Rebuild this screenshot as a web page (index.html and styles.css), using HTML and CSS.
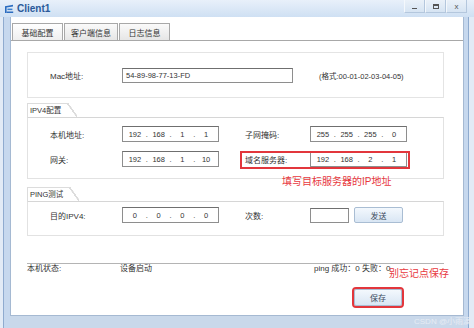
FILE: index.html
```html
<!DOCTYPE html>
<html lang="zh">

<head>
  <meta charset="UTF-8" />
  <title>Client1</title>
  <link rel="stylesheet" href="styles.css">
</head>

<body>
  <div class="window">
    <!-- Заголовок окна -->
    <div class="titlebar">
      <svg class="title-icon" viewBox="0 0 10 10">
        <path d="M1 2.2 L9 0.8 L9 2.4 L2.6 3.4 Z" fill="#2b6cc0" />
        <path d="M1 2.2 L2.6 2.2 L2.6 9 L1 9 Z" fill="#2b6cc0" />
        <rect x="3.4" y="4.6" width="5" height="1.5" fill="#3a80d0" />
        <rect x="2.6" y="7.5" width="6.6" height="1.5" fill="#2b6cc0" />
      </svg>
      <span class="title-text">Client1</span>
      <div class="win-buttons">
        <div class="win-btn"><span class="min-icon"></span></div>
        <div class="win-btn"><span class="max-icon"></span></div>
        <div class="win-btn close">x</div>
      </div>
    </div>

    <div class="frame">
      <div class="client">
        <!-- Вкладки -->
        <div class="tabs">
          <div class="tab active">基础配置</div>
          <div class="tab wide">客户端信息</div>
          <div class="tab">日志信息</div>
        </div>

        <div class="panel">
          <!-- MAC -->
          <div class="mac-box">
            <span class="label">Mac地址:</span>
            <div class="textbox mac">54-89-98-77-13-FD</div>
            <span class="hint">(格式:00-01-02-03-04-05)</span>
          </div>

          <!-- IPV4 -->
          <div class="fieldset ipv4">
            <div class="legend">IPV4配置</div>
            <div class="group-box">
              <div class="row">
                <span class="label">本机地址:</span>
                <div class="ipbox"><span>192</span><i>.</i><span>168</span><i>.</i><span>1</span><i>.</i><span>1</span></div>
                <span class="label right">子网掩码:</span>
                <div class="ipbox"><span>255</span><i>.</i><span>255</span><i>.</i><span>255</span><i>.</i><span>0</span></div>
              </div>
              <div class="row">
                <span class="label">网关:</span>
                <div class="ipbox"><span>192</span><i>.</i><span>168</span><i>.</i><span>1</span><i>.</i><span>10</span></div>
                <div class="highlight">
                  <span class="label right">域名服务器:</span>
                  <div class="ipbox"><span>192</span><i>.</i><span>168</span><i>.</i><span>2</span><i>.</i><span>1</span></div>
                </div>
              </div>
            </div>
            <div class="note dns-note">填写目标服务器的IP地址</div>
          </div>

          <!-- PING -->
          <div class="fieldset ping">
            <div class="legend">PING测试</div>
            <div class="group-box">
              <div class="row">
                <span class="label">目的IPV4:</span>
                <div class="ipbox"><span>0</span><i>.</i><span>0</span><i>.</i><span>0</span><i>.</i><span>0</span></div>
                <span class="label right">次数:</span>
                <div class="textbox count"></div>
                <button class="btn send">发送</button>
              </div>
            </div>
          </div>

          <!-- Состояние -->
          <div class="status">
            <span>本机状态:</span>
            <span>设备启动</span>
            <span>ping 成功：0 失败：0</span>
          </div>
          <div class="note save-note">别忘记点保存</div>

          <div class="save-row">
            <button class="btn save">保存</button>
          </div>
        </div>
      </div>
    </div>
    <div class="watermark">CSDN @小雨滴</div>
  </div>
</body>

</html>
```

FILE: styles.css
```css
* {
  box-sizing: border-box;
}

body {
  margin: 0;
  width: 474px;
  height: 328px;
  overflow: hidden;
  font-family: "Liberation Sans", "Noto Sans CJK SC", sans-serif;
  font-size: 8px;
  color: #333;
  background: #c6d8ee;
}

.window {
  position: relative;
  height: 328px;
  display: flex;
  flex-direction: column;
}

/* Заголовок */
.titlebar {
  height: 17px;
  display: flex;
  align-items: center;
  padding-left: 4px;
  background: linear-gradient(#e8f0fa, #cfe0f3);
}

.title-icon {
  width: 10px;
  height: 10px;
  margin-right: 3px;
}

.title-text {
  font-size: 10px;
  font-weight: bold;
  color: #2a5a9a;
}

.win-buttons {
  margin-left: auto;
  margin-right: 7px;
  align-self: flex-start;
  display: flex;
}

.win-btn {
  width: 21px;
  height: 13px;
  border: 1px solid #b4c7dd;
  border-top: none;
  border-left-color: #f4f8fc;
  background: linear-gradient(#eaf1f9, #d6e4f3);
  display: flex;
  justify-content: center;
  align-items: center;
  color: #555;
  font-size: 8px;
}

.min-icon {
  width: 5px;
  height: 1px;
  margin-top: 5px;
  background: #555;
}

.max-icon {
  width: 6px;
  height: 5px;
  border: 1px solid #555;
  border-top-width: 2px;
}

/* Рамка окна */
.frame {
  flex: 1;
  display: flex;
  padding: 0 10px 12px 10px;
  background:
    linear-gradient(to right, #c6d8ee 0 4px, #8fabcf 4px 5px, #e2ebf6 5px) right / 10px 100% no-repeat,
    linear-gradient(to right, #e2ebf6 0 3px, #8fabcf 3px 4px, #c6d8ee 4px) left / 10px 100% no-repeat,
    #c9d8ea;
}

.client {
  flex: 1;
  display: flex;
  flex-direction: column;
  padding-top: 6px;
  background: #fff;
  border: 1px solid #a5b9d2;
  border-top: none;
}

/* Вкладки */
.tabs {
  display: flex;
  gap: 1px;
  padding-left: 1px;
  height: 17px;
}

.tab {
  width: 51px;
  border: 1px solid #a8a8a8;
  border-bottom: none;
  background: linear-gradient(#fafafa, #e6e6e6);
  display: flex;
  justify-content: center;
  align-items: center;
}

.tab.wide {
  width: 54px;
}

.tab.active {
  background: linear-gradient(#ffffff, #efefef);
}

.panel {
  position: relative;
  flex: 1;
  border-top: 1px solid #a8a8a8;
  padding: 11px 19px 0 16px;
}

.label {
  width: 72px;
  flex-shrink: 0;
}

.label.right {
  width: 65px;
  margin-left: 26px;
}

.textbox {
  height: 15px;
  border: 1px solid #8e8e8e;
  border-top-color: #6f6f6f;
  background: #fff;
  padding-left: 3px;
  display: flex;
  align-items: center;
  font-size: 7.5px;
}

.mac-box {
  height: 46px;
  border: 1px solid #e4e4e4;
  display: flex;
  align-items: center;
  padding-left: 22px;
}

.textbox.mac {
  width: 171px;
}

.hint {
  margin-left: 26px;
  font-size: 7.5px;
}

/* Группы */
.fieldset {
  position: relative;
}

.fieldset.ipv4 {
  margin-top: 5px;
}

.fieldset.ping {
  margin-top: 8px;
}

.legend {
  position: relative;
  display: inline-block;
  height: 14px;
  line-height: 16px;
  padding: 0 16px 0 3px;
  font-size: 7.5px;
}

.legend::before {
  content: "";
  position: absolute;
  top: 0;
  bottom: 0;
  left: 0;
  right: 10px;
  border-top: 1px solid #dcdcdc;
  border-left: 1px solid #dcdcdc;
}

.legend::after {
  content: "";
  position: absolute;
  top: 0;
  bottom: 0;
  right: 0;
  width: 10px;
  background: linear-gradient(to top right, transparent 46%, #dcdcdc 47%, #dcdcdc 56%, transparent 57%);
}

.group-box {
  border: 1px solid #e2e2e2;
  border-top-color: #d6d6d6;
  padding-left: 22px;
}

.ipv4 .group-box {
  height: 62px;
  padding-top: 8px;
  display: flex;
  flex-direction: column;
  gap: 9px;
}

.ping .group-box {
  height: 35px;
  padding-top: 5px;
}

.row {
  display: flex;
  align-items: center;
  height: 16px;
}

.ipbox {
  width: 97px;
  height: 16px;
  flex-shrink: 0;
  border: 1px solid #8e8e8e;
  border-top-color: #6f6f6f;
  padding: 0 3px;
  display: flex;
  align-items: center;
  font-size: 7.5px;
}

.ipbox span {
  width: 18px;
  text-align: center;
}

.ipbox i {
  width: 6px;
  font-style: normal;
  text-align: center;
}

.highlight {
  position: relative;
  display: flex;
  align-items: center;
}

.highlight::after {
  content: "";
  position: absolute;
  top: 0;
  bottom: -2px;
  left: 21px;
  right: -3px;
  border: 2px solid #e2363c;
}

.textbox.count {
  width: 39px;
}

.btn {
  font-family: inherit;
  font-size: 8px;
  color: #3a4a5c;
  border: 1px solid #a9bdd3;
  border-radius: 2px;
  background: linear-gradient(#f3f8fd, #d9e6f4);
  padding: 0;
}

.btn.send {
  width: 49px;
  height: 16px;
  margin-left: 5px;
}

/* Состояние */
.status {
  margin-top: 27px;
  border-top: 1px solid #b4b4b4;
  display: grid;
  grid-template-columns: 93px 194px auto;
  line-height: 10px;
}

.save-row {
  display: flex;
  justify-content: flex-end;
  padding-right: 42px;
  margin-top: 15px;
}

.btn.save {
  width: 48px;
  height: 17px;
  outline: 2px solid #e2363c;
}

/* Красные пометки */
.note {
  position: absolute;
  color: #e8383e;
  font-size: 10px;
  line-height: 12px;
  white-space: nowrap;
}

.dns-note {
  left: 255px;
  top: 73px;
}

.save-note {
  left: 378px;
  top: 227px;
}

.watermark {
  position: absolute;
  right: 3px;
  bottom: 2px;
  font-size: 8px;
  color: #e6ecf4;
}
```
